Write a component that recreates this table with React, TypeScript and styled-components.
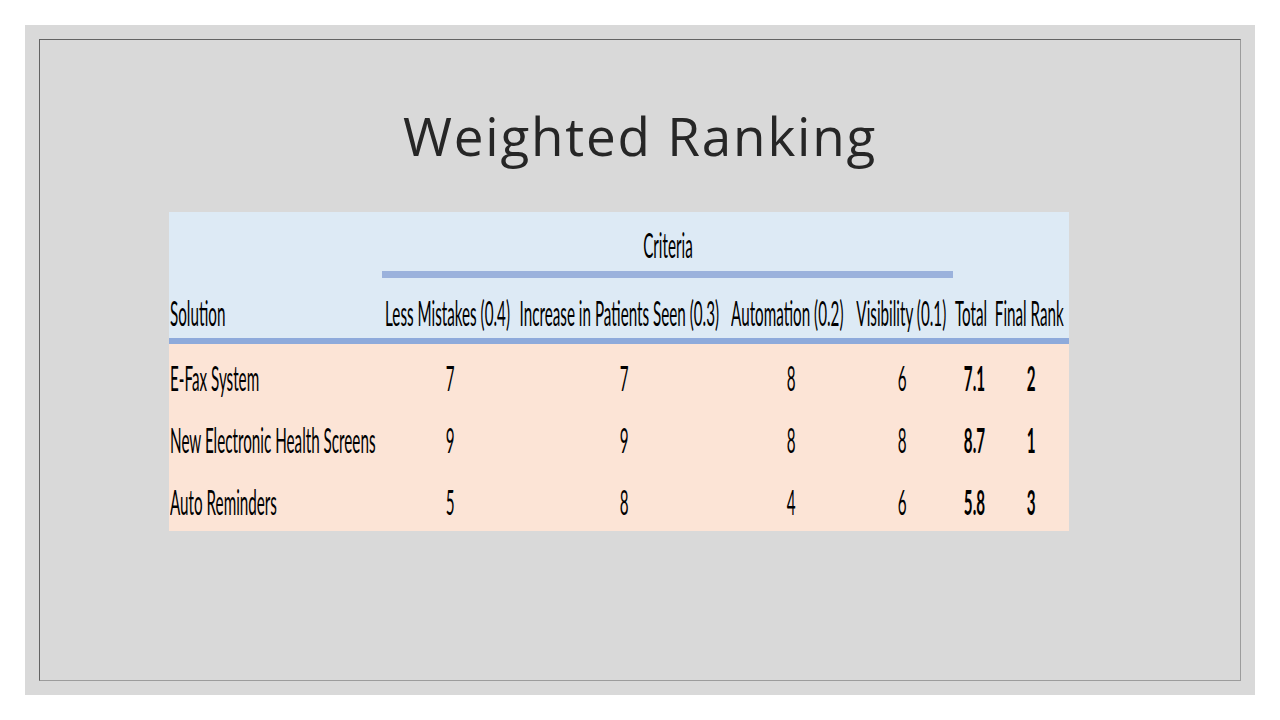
import React from "react";
import styled, { createGlobalStyle } from "styled-components";

const GlobalStyle = createGlobalStyle`
  html, body {
    margin: 0;
    padding: 0;
    background: #ffffff;
  }
  body {
    font-family: "Lato", "Liberation Sans", sans-serif;
  }
`;

const COLS = "213px 132px 211px 125px 103px 37px 79px";

const Slide = styled.div`
  box-sizing: border-box;
  margin: 25px;
  width: 1230px;
  height: 670px;
  padding: 14px;
  background: #d9d9d9;
`;

const Frame = styled.div`
  box-sizing: border-box;
  height: 100%;
  border: 1px solid #9c9c9c;
  border-top-color: #636363;
  border-left-color: #636363;
  display: flex;
  flex-direction: column;
`;

const Title = styled.h1`
  margin: 69px 0 0 0;
  font-family: "Open Sans", "Liberation Sans", sans-serif;
  font-weight: 400;
  font-size: 53px;
  line-height: 53px;
  color: #262626;
  text-align: center;
  letter-spacing: 1.8px;
`;

const Table = styled.div`
  margin: 50px 0 0 129px;
  width: 900px;
  display: flex;
  flex-direction: column;
  color: #000000;
`;

const HeaderBand = styled.div`
  height: 126px;
  background: #ddeaf5;
  display: flex;
  flex-direction: column;
`;

const CriteriaBlock = styled.div`
  margin-left: 213px;
  width: 571px;
  display: flex;
  flex-direction: column;
`;

const CriteriaLabel = styled.div`
  height: 52px;
  margin-bottom: 7px;
  display: flex;
  justify-content: center;
  align-items: flex-end;
`;

const CriteriaRule = styled.div`
  height: 7px;
  background: #9bb2dc;
`;

const HeaderRow = styled.div`
  margin-top: auto;
  height: 56px;
  padding-top: 4px;
  box-sizing: border-box;
  display: grid;
  grid-template-columns: ${COLS};
  align-items: center;
`;

const BandRule = styled.div`
  height: 6px;
  background: #8eaadb;
`;

const Body = styled.div`
  background: #fce4d6;
  padding-bottom: 1px;
`;

const Row = styled.div`
  height: 62px;
  display: grid;
  grid-template-columns: ${COLS};
  align-items: center;
  padding-top: 4px;
  box-sizing: border-box;
`;

const Cell = styled.div<{ $align?: "left" | "center"; $shift?: number }>`
  display: flex;
  justify-content: ${(p) => (p.$align === "left" ? "flex-start" : "center")};
  padding-left: ${(p) => (p.$align === "left" ? 1 : p.$shift ?? 0)}px;
  min-width: 0;
`;

const Squeeze = styled.span<{ $align?: "left" | "center"; $bold?: boolean }>`
  display: inline-block;
  flex-shrink: 0;
  white-space: nowrap;
  font-family: "Lato", "Liberation Sans", sans-serif;
  font-size: 35px;
  line-height: 40px;
  font-weight: ${(p) => (p.$bold ? 700 : 400)};
  transform: scaleX(0.435);
  transform-origin: ${(p) => (p.$align === "left" ? "left" : "center")} center;
`;

type Align = "left" | "center";

const Text: React.FC<{ align?: Align; bold?: boolean; shift?: number; children: React.ReactNode }> = ({
  align = "center",
  bold,
  shift,
  children,
}) => (
  <Cell $align={align} $shift={shift}>
    <Squeeze $align={align} $bold={bold}>
      {children}
    </Squeeze>
  </Cell>
);

const headers = [
  "Less Mistakes (0.4)",
  "Increase in Patients Seen (0.3)",
  "Automation (0.2)",
  "Visibility (0.1)",
  "Total",
  "Final Rank",
];

const rows = [
  { name: "E-Fax System", scores: [7, 7, 8, 6], total: "7.1", rank: 2 },
  { name: "New Electronic Health Screens", scores: [9, 9, 8, 8], total: "8.7", rank: 1 },
  { name: "Auto Reminders", scores: [5, 8, 4, 6], total: "5.8", rank: 3 },
];

const shifts = [4, 9, 7, 1];

export default function App() {
  return (
    <>
      <GlobalStyle />
      <Slide>
        <Frame>
          <Title>Weighted Ranking</Title>
          <Table>
            <HeaderBand>
              <CriteriaBlock>
                <CriteriaLabel>
                  <Squeeze>Criteria</Squeeze>
                </CriteriaLabel>
                <CriteriaRule />
              </CriteriaBlock>
              <HeaderRow>
                <Text align="left">Solution</Text>
                {headers.map((h) => (
                  <Text key={h}>{h}</Text>
                ))}
              </HeaderRow>
            </HeaderBand>
            <BandRule />
            <Body>
              {rows.map((r) => (
                <Row key={r.name}>
                  <Text align="left">{r.name}</Text>
                  {r.scores.map((s, i) => (
                    <Text key={i} shift={shifts[i]}>
                      {s}
                    </Text>
                  ))}
                  <Text bold shift={5}>
                    {r.total}
                  </Text>
                  <Text bold shift={3}>
                    {r.rank}
                  </Text>
                </Row>
              ))}
            </Body>
          </Table>
        </Frame>
      </Slide>
    </>
  );
}
